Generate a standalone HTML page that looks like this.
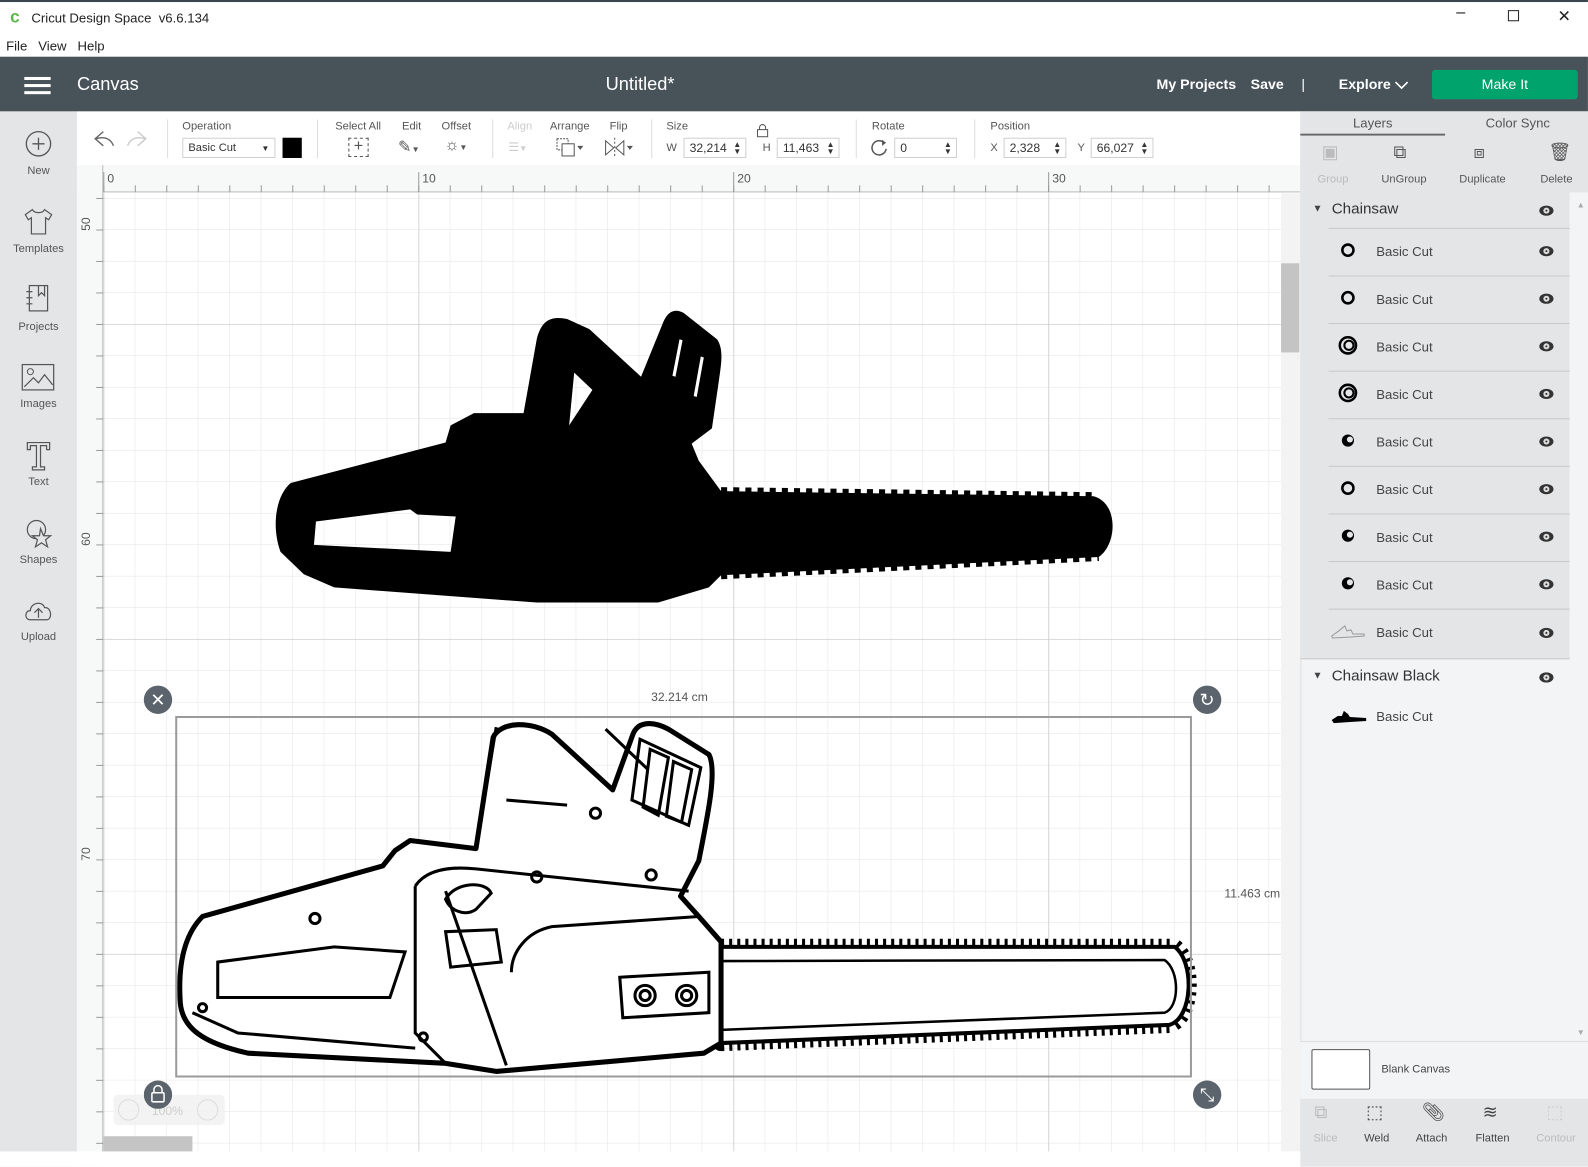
<!DOCTYPE html>
<html><head><meta charset="utf-8">
<style>
*{margin:0;padding:0;box-sizing:border-box}
html,body{width:1588px;height:1152px;overflow:hidden;background:#fff}
body{font-family:"Liberation Sans",sans-serif;color:#333}
#w{position:absolute;left:0;top:0;width:1568px;height:1138px;transform:scale(1.0127);transform-origin:0 0}
.a{position:absolute}
.lbl{font-size:11px;color:#555;position:absolute}
.inp{position:absolute;border:1px solid #d0d0d0;background:#fff;font-size:12px;color:#333;padding:3px 5px;height:20px;line-height:13px}
.side div{position:absolute;left:0;width:76px;text-align:center;font-size:11px;color:#555}
.row{position:absolute;left:1312px;width:238px;height:47px;border-top:1px solid #c9c9c9}
.row span{position:absolute;left:47px;top:15px;font-size:13px;color:#444}
.eye{position:absolute;width:14px;height:10px;border-radius:50%;background:#333;left:1520px}
.eye:after{content:"";position:absolute;left:4px;top:2px;width:6px;height:6px;border-radius:50%;background:#ddd}
.eye:before{content:"";position:absolute;left:6px;top:4px;width:2px;height:2px;background:#333;z-index:2;border-radius:50%}
.btn{position:absolute;width:28px;height:28px;border-radius:50%;background:#5b646c;color:#fff;text-align:center;line-height:28px;font-size:18px}
</style></head><body><div id="w">
<div class="a" style="left:0;top:0;width:1568px;height:2px;background:#3a4650"></div>
<div class="a" style="left:10px;top:7px;color:#5bb548;font-size:17px;font-weight:bold">c</div>
<div class="a" style="left:31px;top:10px;font-size:13px;color:#222">Cricut Design Space&nbsp; v6.6.134</div>
<div class="a" style="left:1438px;top:4px;font-size:16px;color:#222">–</div>
<div class="a" style="left:1489px;top:10px;width:11px;height:11px;border:1.5px solid #222"></div>
<div class="a" style="left:1538px;top:6px;font-size:16px;color:#222">✕</div>
<div class="a" style="left:6px;top:38px;font-size:13px;color:#222">File&nbsp;&nbsp; View&nbsp;&nbsp; Help</div>
<div class="a" style="left:0;top:56px;width:1568px;height:54px;background:#485259"></div>
<div class="a" style="left:24px;top:76px;width:26px;height:3px;background:#fff;box-shadow:0 7px 0 #fff,0 14px 0 #fff"></div>
<div class="a" style="left:76px;top:73px;font-size:18px;color:#fff">Canvas</div>
<div class="a" style="left:598px;top:73px;font-size:18px;color:#fff">Untitled*</div>
<div class="a" style="left:1142px;top:75px;font-size:14px;color:#fff;font-weight:bold">My Projects</div>
<div class="a" style="left:1235px;top:75px;font-size:14px;color:#fff;font-weight:bold">Save</div>
<div class="a" style="left:1285px;top:75px;font-size:14px;color:#fff">|</div>
<div class="a" style="left:1322px;top:75px;font-size:14px;color:#fff;font-weight:bold">Explore</div>
<svg class="a" style="left:1377px;top:79px" width="14" height="10"><path d="M1 2 L7 8 L13 2" stroke="#fff" stroke-width="1.6" fill="none"/></svg>
<div class="a" style="left:1414px;top:69px;width:144px;height:29px;background:#00a36b;border-radius:3px;color:#fff;font-size:14px;text-align:center;line-height:29px">Make It</div>
<div class="a side" style="left:0;top:110px;width:76px;height:1042px;background:#e4e5e7">
<svg class="a" style="left:24px;top:18px" width="28" height="28"><circle cx="14" cy="14" r="12" stroke="#555" stroke-width="1.3" fill="none"/><path d="M14 8v12M8 14h12" stroke="#555" stroke-width="1.3"/></svg>
<div style="top:53px">New</div>
<svg class="a" style="left:22px;top:94px" width="32" height="30"><path d="M10 3 L3 8 L6 13 L9 11 L9 27 L23 27 L23 11 L26 13 L29 8 L22 3 C20 7 12 7 10 3Z" stroke="#555" stroke-width="1.2" fill="none"/></svg>
<div style="top:130px">Templates</div>
<svg class="a" style="left:24px;top:170px" width="28" height="30"><rect x="5" y="2" width="18" height="25" stroke="#555" stroke-width="1.2" fill="none"/><path d="M14 2v10l3-3 3 3V2M2 8h6M2 14h6M2 20h6" stroke="#555" stroke-width="1.2" fill="none"/></svg>
<div style="top:207px">Projects</div>
<svg class="a" style="left:20px;top:248px" width="36" height="30"><rect x="2" y="2" width="31" height="25" stroke="#555" stroke-width="1.2" fill="none"/><circle cx="10" cy="9" r="3" stroke="#555" fill="none"/><path d="M4 24 L13 15 L18 20 L24 12 L32 22" stroke="#555" stroke-width="1.2" fill="none"/></svg>
<div style="top:283px">Images</div>
<svg class="a" style="left:24px;top:324px" width="28" height="32"><path d="M3 3h22v7h-3V6h-6v21h4v3H8v-3h4V6H6v4H3Z" stroke="#555" stroke-width="1.2" fill="none"/></svg>
<div style="top:360px">Text</div>
<svg class="a" style="left:22px;top:400px" width="32" height="32"><circle cx="14" cy="13" r="9" stroke="#555" stroke-width="1.2" fill="none"/><path d="M18 12 L21 19 L28 19 L23 23 L25 30 L19 26 L13 30 L15 23 L10 19 L17 19Z" stroke="#555" stroke-width="1.2" fill="#e4e5e7"/></svg>
<div style="top:437px">Shapes</div>
<svg class="a" style="left:22px;top:480px" width="32" height="26"><path d="M8 22 C2 22 2 13 8 13 C8 5 20 3 22 10 C29 9 30 22 24 22Z" stroke="#555" stroke-width="1.2" fill="none"/><path d="M16 20V11M12 15l4-4 4 4" stroke="#555" stroke-width="1.2" fill="none"/></svg>
<div style="top:513px">Upload</div>
</div>
<div class="a" style="left:76px;top:110px;width:1208px;height:53px;background:#fff"></div>
<svg class="a" style="left:90px;top:126px" width="60" height="22"><path d="M12 4 L4 11 L12 18 M5 11 C14 8 20 12 22 18" stroke="#666" stroke-width="1.4" fill="none"/><path d="M46 4 L54 11 L46 18 M53 11 C44 8 38 12 36 18" stroke="#ccc" stroke-width="1.4" fill="none"/></svg>
<div class="a" style="left:165px;top:118px;width:1px;height:38px;background:#ddd"></div>
<div class="lbl" style="left:180px;top:119px">Operation</div>
<div class="inp" style="left:180px;top:136px;width:92px;font-size:11px">Basic Cut<span style="position:absolute;right:5px;font-size:8px">▼</span></div>
<div class="a" style="left:279px;top:136px;width:19px;height:20px;background:#000"></div>
<div class="a" style="left:313px;top:118px;width:1px;height:38px;background:#ddd"></div>
<div class="lbl" style="left:331px;top:119px">Select All</div>
<div class="a" style="left:344px;top:136px;width:20px;height:19px;border:1px dashed #555;text-align:center;font-size:16px;line-height:16px;color:#555">+</div>
<div class="lbl" style="left:397px;top:119px">Edit</div>
<div class="a" style="left:393px;top:135px;font-size:16px;color:#555">✎<span style="font-size:8px">▼</span></div>
<div class="lbl" style="left:436px;top:119px">Offset</div>
<div class="a" style="left:439px;top:135px;font-size:16px;color:#555">☼<span style="font-size:8px">▼</span></div>
<div class="a" style="left:486px;top:118px;width:1px;height:38px;background:#ddd"></div>
<div class="lbl" style="left:501px;top:119px;color:#ccc">Align</div>
<div class="a" style="left:502px;top:138px;font-size:12px;color:#ccc">☰<span style="font-size:8px">▼</span></div>
<div class="lbl" style="left:543px;top:119px">Arrange</div>
<svg class="a" style="left:548px;top:135px" width="30" height="22"><rect x="2" y="2" width="11" height="11" stroke="#555" stroke-dasharray="2 1" fill="none"/><rect x="7" y="7" width="12" height="12" stroke="#555" fill="#fff"/><path d="M22 9h6l-3 4z" fill="#555"/></svg>
<div class="lbl" style="left:602px;top:119px">Flip</div>
<svg class="a" style="left:596px;top:135px" width="32" height="22"><path d="M2 4 L10 11 L2 18Z M20 4 L12 11 L20 18Z" stroke="#555" fill="none"/><path d="M11 1v20" stroke="#555" stroke-dasharray="2 2"/><path d="M23 9h6l-3 4z" fill="#555"/></svg>
<div class="a" style="left:643px;top:118px;width:1px;height:38px;background:#ddd"></div>
<div class="lbl" style="left:658px;top:119px">Size</div>
<div class="lbl" style="left:658px;top:140px">W</div>
<div class="inp" style="left:675px;top:136px;width:62px">32,214<span style="position:absolute;right:4px;top:2px;font-size:8px;line-height:7px">▲<br>▼</span></div>
<svg class="a" style="left:746px;top:122px" width="14" height="14"><rect x="2" y="6" width="10" height="7" stroke="#555" fill="none"/><path d="M4 6V4a3 3 0 0 1 6 0v2" stroke="#555" fill="none"/></svg>
<div class="lbl" style="left:753px;top:140px">H</div>
<div class="inp" style="left:767px;top:136px;width:62px">11,463<span style="position:absolute;right:4px;top:2px;font-size:8px;line-height:7px">▲<br>▼</span></div>
<div class="a" style="left:845px;top:118px;width:1px;height:38px;background:#ddd"></div>
<div class="lbl" style="left:861px;top:119px">Rotate</div>
<svg class="a" style="left:860px;top:137px" width="18" height="18"><path d="M13 4 A7 7 0 1 0 15 10" stroke="#555" stroke-width="1.5" fill="none"/><path d="M11 1 L15 4 L11 7" fill="#555"/></svg>
<div class="inp" style="left:883px;top:136px;width:62px">0<span style="position:absolute;right:4px;top:2px;font-size:8px;line-height:7px">▲<br>▼</span></div>
<div class="a" style="left:962px;top:118px;width:1px;height:38px;background:#ddd"></div>
<div class="lbl" style="left:978px;top:119px">Position</div>
<div class="lbl" style="left:978px;top:140px">X</div>
<div class="inp" style="left:991px;top:136px;width:62px">2,328<span style="position:absolute;right:4px;top:2px;font-size:8px;line-height:7px">▲<br>▼</span></div>
<div class="lbl" style="left:1064px;top:140px">Y</div>
<div class="inp" style="left:1077px;top:136px;width:62px">66,027<span style="position:absolute;right:4px;top:2px;font-size:8px;line-height:7px">▲<br>▼</span></div>
<div class="a" style="left:76px;top:163px;width:1208px;height:27px;background:#f7f8f8;border-bottom:1px solid #bbb"></div>
<div class="a" style="left:76px;top:163px;width:26px;height:989px;background:#f7f8f8;border-right:1px solid #bbb"></div>
<svg class="a" style="left:0;top:0" width="1284" height="1152">
<defs>
<pattern id="g" x="102" y="8.9" width="31.1" height="31.1" patternUnits="userSpaceOnUse"><path d="M0 0V31.1M0 0H31.1" stroke="#e3e3e3" stroke-width="1"/></pattern>
<pattern id="G" x="102.4" y="320" width="311" height="311" patternUnits="userSpaceOnUse"><path d="M0 0V311M0 0H311" stroke="#c8c8c8" stroke-width="1.2"/></pattern>
<pattern id="rt" x="102" y="0" width="31.1" height="10" patternUnits="userSpaceOnUse"><path d="M0.5 0V10" stroke="#999"/></pattern>
<pattern id="rl" x="0" y="8.9" width="10" height="31.1" patternUnits="userSpaceOnUse"><path d="M0 0.5H10" stroke="#999"/></pattern>
</defs>
<rect x="102" y="191" width="1163" height="961" fill="url(#g)"/>
<rect x="102" y="191" width="1163" height="961" fill="url(#G)"/>
<rect x="102" y="183" width="1163" height="7" fill="url(#rt)"/>
<path d="M102.5 170V190M413.5 170V190M724.5 170V190M1035.5 170V190" stroke="#999"/>
<rect x="95" y="191" width="7" height="961" fill="url(#rl)"/>
<g font-size="12" fill="#555" font-family="Liberation Sans"><text x="106" y="180">0</text><text x="417" y="180">10</text><text x="728" y="180">20</text><text x="1039" y="180">30</text>
<text transform="translate(89,228) rotate(-90)">50</text><text transform="translate(89,539) rotate(-90)">60</text><text transform="translate(89,850) rotate(-90)">70</text></g>
<path fill-rule="evenodd" fill="#000" d="M277 545 C268 520 272 490 287 477 L440 437 L445 420 L468 408 L517 408 L530 335 C535 315 545 312 560 315 L582 325 L633 372 L655 318 C660 306 668 305 675 309 L708 335 C715 345 712 360 710 375 L703 423 L683 438 L690 455 L712 485 L1080 490 C1105 497 1103 538 1085 550 L712 568 L700 580 L650 595 L530 595 L330 580 L300 567 Z
M312 515 L405 503 L412 508 L450 510 L445 545 L310 538 Z M567 368 L585 385 L562 420 Z M671 335 L674 336 L667 372 L664 371Z M692 352 L695 353 L688 392 L685 391Z"/>
<path d="M712 485 L1080 490 M712 568 L1085 550" stroke="#000" stroke-width="8" stroke-dasharray="6 6" fill="none"/>
<g stroke="#000" stroke-width="5" fill="#fff" stroke-linejoin="round">
<path d="M712 935 L1160 935 C1180 950 1178 1005 1155 1012 L712 1030 Z" stroke-width="16" stroke-dasharray="3 5"/>
<path d="M712 935 L1160 935 C1180 950 1178 1005 1155 1012 L712 1030 Z" stroke-width="4" fill="#fff"/>
<path d="M712 949 L1150 948 C1165 958 1165 995 1150 1000 L712 1017" stroke-width="2.5" fill="none"/>
<path d="M487 728 C495 712 525 712 545 725 L605 780 L625 725 C630 712 645 712 660 720 L700 745 C708 760 700 800 690 850 L672 885 L690 905 L712 930 L712 1030 L695 1040 L490 1058 L440 1050 L245 1040 C200 1030 180 1015 178 990 C175 945 185 920 200 905 L378 855 L390 840 L405 830 L470 838 Z"/>
</g>
<g stroke="#000" stroke-width="3" fill="none">
<path d="M190 1000 L235 1020 L410 1035 M215 950 L330 935 L400 940 L385 985 L215 985 Z M410 875 C420 860 440 855 470 858 L680 880 M410 875 L410 1020 L440 1050 M440 880 L500 1052 M505 960 C505 940 520 920 545 915 L690 905 M440 920 L490 918 L495 950 L445 955 Z M612 965 L700 960 L700 1000 L615 1005 Z M490 718 L470 838 M500 790 L560 795 M598 720 L640 760"/>
<circle cx="637" cy="983" r="10"/><circle cx="678" cy="983" r="10"/><circle cx="637" cy="983" r="5"/><circle cx="678" cy="983" r="5"/>
<circle cx="311" cy="907" r="5"/><circle cx="588" cy="803" r="5"/><circle cx="643" cy="864" r="5"/><circle cx="200" cy="995" r="4"/><circle cx="418" cy="1024" r="4"/><circle cx="530" cy="866" r="5"/>
<path d="M440 888 C450 870 480 870 485 882 L470 898 C460 905 445 900 440 888Z"/>
<path d="M632 730 L692 758 L680 815 L624 790 Z M642 740 L660 748 L650 805 L635 797 Z M665 752 L683 760 L673 812 L658 806 Z" stroke-width="3"/>
</g>
<rect x="174" y="708" width="1002" height="355" fill="none" stroke="#9a9a9a" stroke-width="2"/>
<text x="643" y="692" font-size="12" fill="#555" font-family="Liberation Sans">32.214 cm</text>
<text x="1209" y="886" font-size="12" fill="#555" font-family="Liberation Sans">11.463 cm</text>
<rect x="1265" y="191" width="19" height="961" fill="#f3f3f3"/>
<rect x="1265" y="260" width="18" height="88" fill="#c4c4c4"/>
<rect x="102" y="1122" width="88" height="15" fill="#c4c4c4"/>
<rect x="112" y="1081" width="110" height="30" rx="5" fill="#f0f0f0" opacity="0.8"/>
<circle cx="127" cy="1096" r="10" stroke="#ddd" fill="none"/><circle cx="205" cy="1096" r="10" stroke="#ddd" fill="none"/>
<text x="150" y="1101" font-size="12" fill="#ccc" font-family="Liberation Sans">100%</text>
</svg>
<div class="btn" style="left:142px;top:677px">✕</div>
<div class="btn" style="left:1178px;top:677px">↻</div>
<div class="btn" style="left:1178px;top:1067px">⤡</div>
<svg class="a" style="left:142px;top:1067px" width="28" height="28"><circle cx="14" cy="14" r="14" fill="#5b646c"/><rect x="8" y="12" width="12" height="9" rx="1" stroke="#fff" stroke-width="1.5" fill="none"/><path d="M10 12V9a4 4 0 0 1 8 0v3" stroke="#fff" stroke-width="1.5" fill="none"/></svg>
<div class="a" style="left:1284px;top:110px;width:286px;height:1042px;background:#f3f4f5;border-left:1px solid #ddd"></div>
<div class="a" style="left:1284px;top:110px;width:286px;height:24px;background:#e4e5e7"></div>
<div class="a" style="left:1336px;top:114px;font-size:13px;color:#555">Layers</div>
<div class="a" style="left:1467px;top:114px;font-size:13px;color:#555">Color Sync</div>
<div class="a" style="left:1284px;top:132px;width:143px;height:2px;background:#666"></div>
<div class="a" style="left:1284px;top:134px;width:286px;height:56px;background:#e4e5e7"></div>
<div class="a" style="left:1305px;top:140px;font-size:18px;color:#bbb">▣</div>
<div class="a" style="left:1376px;top:140px;font-size:18px;color:#555">⧉</div>
<div class="a" style="left:1455px;top:140px;font-size:18px;color:#555">⧈</div>
<div class="a" style="left:1529px;top:140px;font-size:18px;color:#555">🗑︎</div>
<div class="a" style="left:1301px;top:171px;font-size:11px;color:#bbb">Group</div>
<div class="a" style="left:1364px;top:171px;font-size:11px;color:#555">UnGroup</div>
<div class="a" style="left:1441px;top:171px;font-size:11px;color:#555">Duplicate</div>
<div class="a" style="left:1521px;top:171px;font-size:11px;color:#555">Delete</div>
<div class="a" style="left:1284px;top:190px;width:266px;height:461px;background:#e4e5e7;border-bottom:1px solid #c9c9c9"></div>
<div class="a" style="left:1296px;top:201px;font-size:10px;color:#444">▼</div>
<div class="a" style="left:1315px;top:198px;font-size:15px;color:#333">Chainsaw</div>
<div class="eye" style="top:203px"></div>
<div class="row" style="top:225px"><span>Basic Cut</span></div>
<div class="row" style="top:272px"><span>Basic Cut</span></div>
<div class="row" style="top:319px"><span>Basic Cut</span></div>
<div class="row" style="top:366px"><span>Basic Cut</span></div>
<div class="row" style="top:413px"><span>Basic Cut</span></div>
<div class="row" style="top:460px"><span>Basic Cut</span></div>
<div class="row" style="top:507px"><span>Basic Cut</span></div>
<div class="row" style="top:554px"><span>Basic Cut</span></div>
<div class="row" style="top:601px"><span>Basic Cut</span></div>
<svg class="a" style="left:1312px;top:230px" width="40" height="420">
<circle cx="19" cy="17" r="5.5" stroke="#000" stroke-width="2.5" fill="none"/>
<circle cx="19" cy="64" r="5.5" stroke="#000" stroke-width="2.5" fill="none"/>
<circle cx="19" cy="111" r="8" stroke="#000" stroke-width="2.5" fill="none"/><circle cx="20" cy="111" r="4.5" stroke="#000" stroke-width="2" fill="none"/>
<circle cx="19" cy="158" r="8" stroke="#000" stroke-width="2.5" fill="none"/><circle cx="20" cy="158" r="4.5" stroke="#000" stroke-width="2" fill="none"/>
<circle cx="19" cy="205" r="6" fill="#000"/><circle cx="21" cy="204" r="3" fill="#e4e5e7"/>
<circle cx="19" cy="252" r="5.5" stroke="#000" stroke-width="2.5" fill="none"/>
<circle cx="19" cy="299" r="6" fill="#000"/><circle cx="21" cy="298" r="3" fill="#e4e5e7"/>
<circle cx="19" cy="346" r="6" fill="#000"/><circle cx="21" cy="345" r="3" fill="#e4e5e7"/>
<path d="M3 398 L10 393 L16 388 L18 393 L22 392 L24 396 L35 396 L35 398 L22 399 L4 400Z" stroke="#999" fill="none"/>
</svg>
<div class="eye" style="top:243px"></div><div class="eye" style="top:290px"></div><div class="eye" style="top:337px"></div><div class="eye" style="top:384px"></div><div class="eye" style="top:431px"></div><div class="eye" style="top:478px"></div><div class="eye" style="top:525px"></div><div class="eye" style="top:572px"></div><div class="eye" style="top:620px"></div>
<div class="a" style="left:1296px;top:662px;font-size:10px;color:#444">▼</div>
<div class="a" style="left:1315px;top:659px;font-size:15px;color:#333">Chainsaw Black</div>
<div class="eye" style="top:664px"></div>
<svg class="a" style="left:1313px;top:700px" width="38" height="16"><path d="M2 11 L8 7 L12 7 L14 2 L18 5 L20 8 L36 9 L36 12 L20 13 L4 14Z" fill="#000"/></svg>
<div class="a" style="left:1359px;top:700px;font-size:13px;color:#444">Basic Cut</div>
<div class="a" style="left:1557px;top:198px;font-size:8px;color:#aaa">▲</div>
<div class="a" style="left:1557px;top:1015px;font-size:8px;color:#aaa">▼</div>
<div class="a" style="left:1284px;top:1028px;width:286px;height:57px;background:#f3f4f5;border-top:1px solid #ddd"></div>
<div class="a" style="left:1295px;top:1036px;width:58px;height:40px;background:#fff;border:1px solid #555;border-radius:2px"></div>
<div class="a" style="left:1364px;top:1050px;font-size:11px;color:#444">Blank Canvas</div>
<div class="a" style="left:1284px;top:1085px;width:286px;height:67px;background:#e4e5e7"></div>
<div class="a" style="left:1298px;top:1088px;font-size:18px;color:#bbb">⧉</div>
<div class="a" style="left:1349px;top:1088px;font-size:18px;color:#444">⬚</div>
<div class="a" style="left:1404px;top:1088px;font-size:18px;color:#444">📎︎</div>
<div class="a" style="left:1464px;top:1088px;font-size:18px;color:#444">≋</div>
<div class="a" style="left:1527px;top:1088px;font-size:18px;color:#ccc">⬚</div>
<div class="a" style="left:1297px;top:1118px;font-size:11px;color:#bbb">Slice</div>
<div class="a" style="left:1347px;top:1118px;font-size:11px;color:#444">Weld</div>
<div class="a" style="left:1398px;top:1118px;font-size:11px;color:#444">Attach</div>
<div class="a" style="left:1457px;top:1118px;font-size:11px;color:#444">Flatten</div>
<div class="a" style="left:1517px;top:1118px;font-size:11px;color:#bbb">Contour</div>
<div class="a" style="left:0;top:1137px;width:1284px;height:15px;background:#fff"></div>
</div></body></html>
